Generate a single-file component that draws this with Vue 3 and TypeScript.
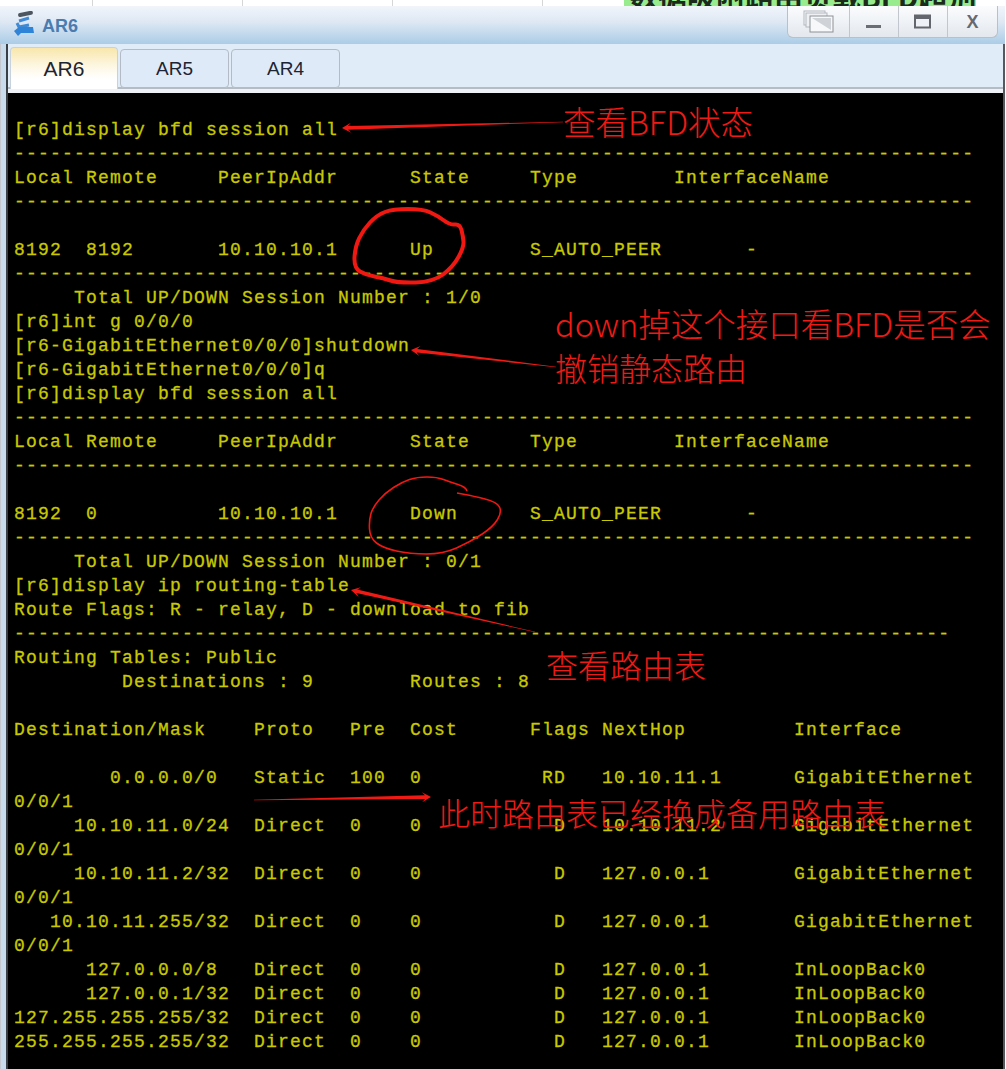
<script setup lang="ts">
const dash = (n: number): string => '-'.repeat(n)

const gig = 'GigabitEthernet'
const lines: string[] = [
  '',
  '[r6]display bfd session all',
  dash(80),
  'Local Remote     PeerIpAddr      State     Type        InterfaceName',
  dash(80),
  '',
  '8192  8192       10.10.10.1      Up        S_AUTO_PEER       -',
  dash(80),
  '     Total UP/DOWN Session Number : 1/0',
  '[r6]int g 0/0/0',
  '[r6-GigabitEthernet0/0/0]shutdown',
  '[r6-GigabitEthernet0/0/0]q',
  '[r6]display bfd session all',
  dash(80),
  'Local Remote     PeerIpAddr      State     Type        InterfaceName',
  dash(80),
  '',
  '8192  0          10.10.10.1      Down      S_AUTO_PEER       -',
  dash(80),
  '     Total UP/DOWN Session Number : 0/1',
  '[r6]display ip routing-table',
  'Route Flags: R - relay, D - download to fib',
  dash(78),
  'Routing Tables: Public',
  '         Destinations : 9        Routes : 8',
  '',
  'Destination/Mask    Proto   Pre  Cost      Flags NextHop         Interface',
  '',
  `        0.0.0.0/0   Static  100  0          RD   10.10.11.1      ${gig}`,
  '0/0/1',
  `     10.10.11.0/24  Direct  0    0           D   10.10.11.2      ${gig}`,
  '0/0/1',
  `     10.10.11.2/32  Direct  0    0           D   127.0.0.1       ${gig}`,
  '0/0/1',
  `   10.10.11.255/32  Direct  0    0           D   127.0.0.1       ${gig}`,
  '0/0/1',
  '      127.0.0.0/8   Direct  0    0           D   127.0.0.1       InLoopBack0',
  '      127.0.0.1/32  Direct  0    0           D   127.0.0.1       InLoopBack0',
  '127.255.255.255/32  Direct  0    0           D   127.0.0.1       InLoopBack0',
  '255.255.255.255/32  Direct  0    0           D   127.0.0.1       InLoopBack0',
]

type Pt = [number, number]

// tapered arrow: hair-thin at the tail, thick shaft near the barbed tip
function arrow(tail: Pt, tip: Pt, w = 3.6, head = 9): string {
  const dx = tip[0] - tail[0]
  const dy = tip[1] - tail[1]
  const len = Math.hypot(dx, dy)
  const ux = dx / len
  const uy = dy / len
  const nx = -uy
  const ny = ux
  const base: Pt = [tip[0] - ux * head, tip[1] - uy * head]
  const neck: Pt = [tip[0] - ux * (head - 3), tip[1] - uy * (head - 3)]
  const pts: Pt[] = [
    [tail[0] + nx * 0.2, tail[1] + ny * 0.2],
    [neck[0] + (nx * w) / 2, neck[1] + (ny * w) / 2],
    [base[0] + nx * 5, base[1] + ny * 5],
    tip,
    [base[0] - nx * 5, base[1] - ny * 5],
    [neck[0] - (nx * w) / 2, neck[1] - (ny * w) / 2],
    [tail[0] - nx * 0.2, tail[1] - ny * 0.2],
  ]
  return pts.map((p) => p.join(',')).join(' ')
}

const arrows: string[] = [
  arrow([563, 122], [342, 128]),
  arrow([556, 367], [411, 350]),
  arrow([535, 632], [351, 590]),
  arrow([254, 800], [431, 797]),
]

// freehand stroke: smooth the sampled points with midpoint quadratics
function smooth(pts: Pt[], closed: boolean): string {
  const mid = (a: Pt, b: Pt): Pt => [(a[0] + b[0]) / 2, (a[1] + b[1]) / 2]
  if (closed) {
    let d = `M${mid(pts[pts.length - 1], pts[0]).join(' ')}`
    pts.forEach((p, i) => {
      d += ` Q${p.join(' ')} ${mid(p, pts[(i + 1) % pts.length]).join(' ')}`
    })
    return d + ' Z'
  }
  let d = `M${pts[0].join(' ')}`
  for (let i = 1; i < pts.length - 1; i++) {
    d += ` Q${pts[i].join(' ')} ${mid(pts[i], pts[i + 1]).join(' ')}`
  }
  return d + ` L${pts[pts.length - 1].join(' ')}`
}

const upCircle = smooth(
  [
    [463, 236], [460, 224], [450, 225], [438, 216], [423, 209], [393, 209], [377, 215],
    [363, 230], [355, 247], [354, 268], [366, 275], [383, 278], [398, 283], [433, 282],
    [453, 267], [464, 247],
  ],
  true,
)
const downCircle = smooth(
  [
    [467, 491], [466, 487], [450, 482], [437, 477], [417, 477], [402, 482], [385, 493],
    [373, 507], [369, 520], [370, 538], [383, 548], [410, 554], [443, 554], [470, 542],
    [493, 527], [502, 512], [497, 502], [473, 496], [457, 493],
  ],
  false,
)

const tabs = ['AR6', 'AR5', 'AR4']
</script>

<template>
  <div class="page">
    <div class="backdrop">
      <span class="rule r1"></span>
      <span class="rule r2"></span>
      <span class="rule r3"></span>
      <span class="rule r4"></span>
      <div class="highlight"><span>数据吸附路由负载BFD超别</span></div>
    </div>

    <div class="window">
      <header class="titlebar">
        <svg class="logo" viewBox="0 0 24 28" width="24" height="28">
          <rect x="5" y="1" width="15" height="4" rx="2" transform="rotate(-12 12 3)" fill="#4d5560" />
          <path d="M6 10 L16 7 M4 12 L6 16 L16 14" fill="none" stroke="#3f8ad4" stroke-width="3" />
          <path d="M1 20 L6 16 H20 L21 22 H8 L5 25 Z" fill="#2f84d8" />
        </svg>
        <span class="title">AR6</span>
        <div class="controls">
          <button class="ctl ctl-wide" type="button" aria-label="restore all">
            <svg viewBox="0 0 32 24" width="32" height="24">
              <rect x="1" y="2" width="21" height="14" fill="#f4f6f9" stroke="#b4b8bd" />
              <rect x="3" y="4" width="21" height="14" fill="#eef0f3" stroke="#b4b8bd" />
              <rect x="7" y="7" width="23" height="16" fill="#f7f8fa" stroke="#8d9196" />
              <path d="M9 9 H28 V21 Z" fill="#cfd2d6" />
            </svg>
          </button>
          <button class="ctl" type="button" aria-label="minimize">
            <svg viewBox="0 0 16 16" width="16" height="16">
              <rect x="0" y="11" width="15" height="3" fill="#6a6e74" />
            </svg>
          </button>
          <button class="ctl" type="button" aria-label="maximize">
            <svg viewBox="0 0 18 16" width="18" height="16">
              <rect x="1" y="1.5" width="15" height="12" fill="#eef1f5" stroke="#63676d" stroke-width="2" />
              <rect x="1" y="1" width="15" height="4" fill="#63676d" />
            </svg>
          </button>
          <button class="ctl ctl-x" type="button" aria-label="close">X</button>
        </div>
      </header>

      <div class="body">
        <nav class="tabs">
          <div v-for="(t, i) in tabs" :key="t" class="tab" :class="{ active: i === 0 }">{{ t }}</div>
        </nav>
        <pre class="terminal"><div v-for="(l, i) in lines" :key="i" class="line">{{ l }}</div></pre>
      </div>
    </div>

    <svg class="marks" viewBox="0 0 1006 1069" width="1006" height="1069">
      <polygon v-for="(a, i) in arrows" :key="i" :points="a" fill="#f01a14" />
      <path :d="upCircle" fill="none" stroke="#f21812" stroke-width="4" stroke-linejoin="round" />
      <path :d="downCircle" fill="none" stroke="#f21812" stroke-width="1.6" stroke-linejoin="round" />
    </svg>

    <div class="note n1">查看BFD状态</div>
    <div class="note n2">down掉这个接口看BFD是否会</div>
    <div class="note n3">撤销静态路由</div>
    <div class="note n4">查看路由表</div>
    <div class="note n5">此时路由表已经换成备用路由表</div>
  </div>
</template>

<style scoped>
.page {
  position: relative;
  width: 1006px;
  height: 1069px;
  overflow: hidden;
  background: #fff;
  display: flex;
  flex-direction: column;
}

.backdrop {
  position: relative;
  height: 6px;
  flex: none;
  overflow: hidden;
  background: #fff;
}
.rule {
  position: absolute;
  top: 0;
  width: 1px;
  height: 6px;
  background: #d6d6d6;
}
.r1 { left: 92px; }
.r2 { left: 242px; }
.r3 { left: 392px; }
.r4 { left: 542px; }
.highlight {
  position: absolute;
  left: 624px;
  top: 0;
  width: 352px;
  height: 6px;
  background: #98ec8e;
  overflow: hidden;
}
.highlight span {
  position: absolute;
  left: 5px;
  bottom: -4px;
  white-space: nowrap;
  font: 700 29px/30px "Noto Sans CJK SC", sans-serif;
  color: #1c2a1c;
}

.window {
  flex: 1;
  min-height: 0;
  display: flex;
  flex-direction: column;
  margin-right: 1px;
  border-radius: 6px 6px 0 0;
  background: #c9dced;
  box-shadow: inset 0 1px 0 #a8a8a8, inset 1px 0 0 #c5c9cf;
}

.titlebar {
  flex: none;
  height: 38px;
  display: flex;
  align-items: flex-start;
  padding-left: 13px;
  background: linear-gradient(#f1f5fb, #dfe9f4 40%, #abcce7);
}
.logo {
  margin-top: 5px;
}
.title {
  margin: 8px 0 0 5px;
  font: 700 18px/24px "Liberation Sans", sans-serif;
  color: #4a7cb0;
}
.controls {
  margin: 0 7px 0 auto;
  height: 31px;
  display: flex;
  border: 1px solid #b9c0c8;
  border-top: none;
  border-radius: 0 0 6px 6px;
  background: linear-gradient(#fbfcfe, #e3e8ee);
}
.ctl {
  width: 49px;
  padding: 0;
  border: none;
  border-left: 1px solid #c2c7cd;
  background: none;
  display: flex;
  align-items: center;
  justify-content: center;
  font: 700 18px/1 "Liberation Sans", sans-serif;
  color: #666a70;
}
.ctl-wide {
  width: 61px;
  border-left: none;
}
.ctl-wide svg {
  margin-top: -2px;
}
.ctl-x {
  width: 50px;
}

.body {
  flex: 1;
  min-height: 0;
  margin: 0 0 0 6px;
  display: flex;
  flex-direction: column;
  border-left: 2px solid #3a3f45;
  border-right: 2px solid #55585c;
}

.tabs {
  flex: none;
  height: 49px;
  display: flex;
  align-items: flex-start;
  gap: 2px;
  padding: 3px 0 0 2px;
  box-sizing: border-box;
  background: linear-gradient(#e0ecf8 43px, #b5bcc4 43px, #b5bcc4 45px, #eef2f7 45px);
}
.tab {
  width: 109px;
  height: 39px;
  margin-top: 2px;
  box-sizing: border-box;
  display: flex;
  align-items: center;
  justify-content: center;
  border: 1px solid #b3bcc6;
  border-radius: 4px;
  background: #deeaf7;
  font: 400 19px/1 "Liberation Sans", sans-serif;
  color: #1d2433;
}
.tab.active {
  width: 108px;
  height: 42px;
  margin-top: 0;
  border-color: #c8d2dc;
  border-bottom: none;
  border-radius: 4px 4px 0 0;
  background: linear-gradient(#f8e6ab, #fdf6de 40%, #ffffff 75%);
  font-size: 21px;
}

.terminal {
  flex: 1;
  min-height: 0;
  margin: 0;
  padding: 1px 0 0 6px;
  overflow: hidden;
  background: #000;
  color: #c9c900;
  font: 400 18px/24px "Liberation Mono", monospace;
  letter-spacing: 1.2px;
  -webkit-text-stroke: 0.3px #c9c900;
  white-space: pre;
}
.line {
  height: 24px;
}

.marks {
  position: absolute;
  inset: 0;
  pointer-events: none;
}

.note {
  position: absolute;
  white-space: nowrap;
  font: 300 32px/40px "Noto Sans CJK SC", sans-serif;
  color: #f01a14;
}
.n1 { left: 563px; top: 101px; font-size: 32.5px; }
.n2 { left: 555px; top: 303px; font-size: 32.5px; }
.n3 { left: 555px; top: 347px; }
.n4 { left: 546px; top: 644px; }
.n5 { left: 438px; top: 792px; }
</style>
